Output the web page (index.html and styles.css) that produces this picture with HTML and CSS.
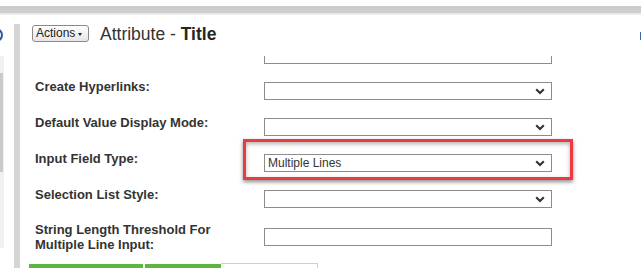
FILE: index.html
```html
<!DOCTYPE html>
<html>
<head>
<meta charset="utf-8">
<title>Attribute - Title</title>
<link rel="stylesheet" href="styles.css">
</head>
<body>
<div class="topstrip"><div class="topbar"></div></div>
<div class="main">
  <aside class="leftpanel">
    <span class="lefticon"></span>
    <div class="lefttrack"><div class="leftthumb"></div></div>
  </aside>
  <div class="divider"></div>
  <section class="content">
    <header class="header">
      <button class="actions" type="button">Actions<span class="caret"></span></button>
      <h1 class="title">Attribute - <b>Title</b></h1>
    </header>
    <div class="scroller">
      <div class="form">
        <div class="row row-hidden">
          <span class="label"></span>
          <div class="select"></div>
        </div>
        <div class="row">
          <span class="label">Create Hyperlinks:</span>
          <div class="select"><span class="value"></span><svg class="chev" width="10" height="7" viewBox="0 0 10 7"><polyline points="1.2,1.2 5,5 8.8,1.2" fill="none" stroke="#333" stroke-width="2.1"/></svg></div>
        </div>
        <div class="row">
          <span class="label">Default Value Display Mode:</span>
          <div class="select"><span class="value"></span><svg class="chev" width="10" height="7" viewBox="0 0 10 7"><polyline points="1.2,1.2 5,5 8.8,1.2" fill="none" stroke="#333" stroke-width="2.1"/></svg></div>
        </div>
        <div class="row row-highlight">
          <span class="label">Input Field Type:</span>
          <div class="select"><span class="value">Multiple Lines</span><svg class="chev" width="10" height="7" viewBox="0 0 10 7"><polyline points="1.2,1.2 5,5 8.8,1.2" fill="none" stroke="#333" stroke-width="2.1"/></svg></div>
          <div class="highlight"></div>
        </div>
        <div class="row">
          <span class="label">Selection List Style:</span>
          <div class="select"><span class="value"></span><svg class="chev" width="10" height="7" viewBox="0 0 10 7"><polyline points="1.2,1.2 5,5 8.8,1.2" fill="none" stroke="#333" stroke-width="2.1"/></svg></div>
        </div>
        <div class="row row-two">
          <span class="label">String Length Threshold For Multiple Line Input:</span>
          <input class="textinput" type="text">
        </div>
      </div>
      <div class="tabs">
        <div class="tab tab-green tab-wide"></div>
        <div class="tab tab-green tab-mid"></div>
        <div class="tab tab-plain"></div>
      </div>
    </div>
  </section>
  <div class="rightedge"><span class="righticon"></span></div>
</div>
</body>
</html>
```

FILE: styles.css
```css
html, body {
  margin: 0;
  padding: 0;
  background: #ffffff;
}
body {
  width: 641px;
  height: 268px;
  overflow: hidden;
  font-family: "Liberation Sans", Arial, sans-serif;
  color: #333;
}
.topstrip {
  height: 15px;
  padding-top: 6px;
  box-sizing: border-box;
}
.topbar {
  height: 9px;
  background: linear-gradient(#cbcbcb 0, #cfcfcf 7px, #e6e6e6 7px, #eeeeee 9px);
}
.main {
  display: flex;
  height: 253px;
  overflow: hidden;
}
.leftpanel {
  width: 14px;
  flex: none;
  overflow: hidden;
  display: flex;
  flex-direction: column;
}
.lefticon {
  display: block;
  width: 14px;
  height: 14px;
  box-sizing: border-box;
  border: 2.5px solid #2b5795;
  border-radius: 50%;
  margin-top: 13px;
  margin-left: -11px;
}
.lefttrack {
  width: 4px;
  height: 192px;
  margin-top: 14px;
  background: #f1f1f1;
  padding-top: 17px;
  box-sizing: border-box;
}
.leftthumb {
  width: 3px;
  height: 99px;
  background: #cacaca;
}
.divider {
  width: 6px;
  flex: none;
  margin-top: 9px;
  background: #d5d5d5;
}
.content {
  flex: 1;
  display: flex;
  flex-direction: column;
  min-width: 0;
}
.header {
  height: 41px;
  flex: none;
  display: flex;
  align-items: flex-start;
  padding-left: 12px;
}
.actions {
  margin: 10px 0 0 0;
  height: 17px;
  box-sizing: border-box;
  display: flex;
  align-items: center;
  padding: 0 6px 1px 3px;
  border: 1px solid #8a8a8a;
  border-radius: 3px;
  background: linear-gradient(#ffffff, #e6e6e6);
  font-family: "Liberation Sans", Arial, sans-serif;
  font-size: 12px;
  line-height: 13px;
  color: #222;
  width: 57px;
}
.caret {
  display: inline-block;
  width: 0;
  height: 0;
  margin-left: 3px;
  margin-top: 3px;
  border-left: 2.5px solid transparent;
  border-right: 2.5px solid transparent;
  border-top: 3px solid #222;
}
.title {
  margin: 9px 0 0 11px;
  font-size: 17.5px;
  line-height: 20px;
  font-weight: normal;
  color: #333;
  white-space: nowrap;
}
.title b {
  color: #262626;
}
.scroller {
  flex: 1;
  overflow: hidden;
}
.form {
  margin-top: -19px;
}
.row {
  display: grid;
  grid-template-columns: 229px 288px;
  align-items: center;
  height: 36px;
  padding-left: 15px;
  position: relative;
}
.label {
  font-size: 13px;
  line-height: 15px;
  font-weight: bold;
  color: #333;
  padding-bottom: 9px;
  padding-right: 24px;
}
.row-two {
  height: 40px;
}
.row-two .label {
  padding-bottom: 0;
}
.select {
  height: 18px;
  box-sizing: border-box;
  border: 1px solid #8c8c8c;
  background: #fff;
  display: flex;
  align-items: center;
  justify-content: space-between;
  padding: 0 6px 0 3px;
  font-size: 12px;
  line-height: 16px;
  color: #333;
}
.chev {
  display: block;
}
.textinput {
  height: 18px;
  width: 288px;
  box-sizing: border-box;
  margin: 0;
  padding: 0;
  border: 1px solid #8c8c8c;
  background: #fff;
}
.highlight {
  position: absolute;
  left: 223px;
  top: -6px;
  width: 330px;
  height: 41px;
  box-sizing: border-box;
  border: 3px solid #ec3b40;
  box-shadow: 0 2px 4px rgba(0, 0, 0, 0.45), inset 0 2px 4px rgba(0, 0, 0, 0.3);
  pointer-events: none;
}
.tabs {
  display: flex;
  align-items: flex-start;
  margin-top: 6px;
  padding-left: 9px;
}
.tab {
  height: 12px;
  box-sizing: border-box;
}
.tab-green {
  background: #5cb63f;
  margin-top: 1px;
}
.tab-wide {
  width: 114px;
}
.tab-mid {
  width: 76px;
  margin-left: 2px;
}
.tab-plain {
  width: 97px;
  background: #fff;
  border-top: 1px solid #cfcfcf;
  border-right: 1px solid #cfcfcf;
}
.rightedge {
  width: 1px;
  flex: none;
}
.righticon {
  display: block;
  width: 1px;
  height: 8px;
  margin-top: 17px;
  background: #3a68a6;
}
```
